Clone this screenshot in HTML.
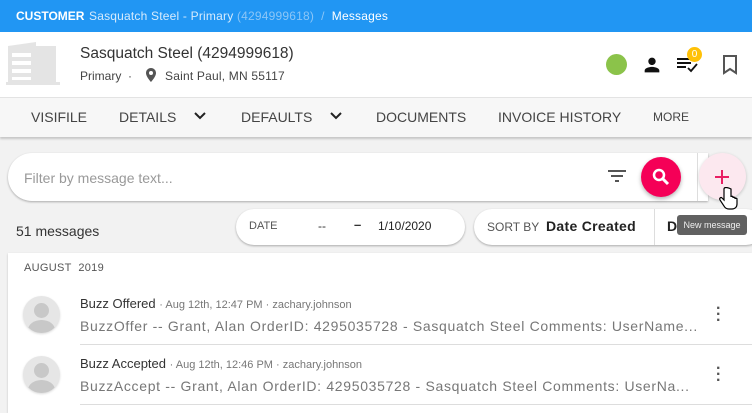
<!DOCTYPE html>
<html><head><style>
*{box-sizing:border-box;margin:0;padding:0}
body{width:752px;height:406px;overflow:hidden;background:#f2f2f2;font-family:"Liberation Sans",sans-serif;position:relative}
.a{position:absolute;white-space:nowrap}
</style></head><body>
<div class="a" style="left:0;top:0;width:752px;height:32px;background:#2196f3"></div>
<div class="a" style="left:16px;top:9px;font-size:12px;color:#fff;font-weight:bold">CUSTOMER</div>
<div class="a" style="left:89px;top:9px;font-size:12px;color:#d6ebfd;letter-spacing:.2px">Sasquatch Steel - Primary <span style="color:#8cc6f7">(4294999618)</span> <span style="color:#8cc6f7">&nbsp;/&nbsp;</span> <span style="color:#fff">Messages</span></div>
<div class="a" style="left:0;top:32px;width:752px;height:65px;background:#fff"></div>
<svg class="a" style="left:6px;top:42px" width="54" height="44"><path d="M2 4 L30 0 L30 42 L2 42Z" fill="#e4e4e4"/><path d="M30 4 L50 4 L50 42 L30 42Z" fill="#e4e4e4"/><rect x="0" y="40" width="54" height="3" fill="#e4e4e4"/><g fill="#fff"><rect x="6" y="11" width="19" height="4"/><rect x="6" y="19" width="19" height="4"/><rect x="6" y="27" width="19" height="4"/><rect x="6" y="35" width="19" height="3"/></g></svg>
<div class="a" style="left:80px;top:45px;font-size:15.5px;color:#333">Sasquatch Steel (4294999618)</div>
<div class="a" style="left:80px;top:69px;font-size:12px;color:#444">Primary &nbsp;·&nbsp;</div>
<svg class="a" style="left:146px;top:68px" width="10" height="14" viewBox="0 0 10 14"><path d="M5 0C2.2 0 0 2.2 0 5c0 3.7 5 9 5 9s5-5.3 5-9C10 2.2 7.8 0 5 0zm0 7a2 2 0 110-4 2 2 0 010 4z" fill="#555"/></svg>
<div class="a" style="left:165px;top:69px;font-size:12px;color:#444;letter-spacing:.2px">Saint Paul, MN 55117</div>
<div class="a" style="left:606px;top:54px;width:21px;height:21px;border-radius:50%;background:#8bc34a"></div>
<svg class="a" style="left:641px;top:54px" width="22" height="22" viewBox="0 0 24 24"><path d="M12 12c2.2 0 4-1.8 4-4s-1.8-4-4-4-4 1.8-4 4 1.8 4 4 4zm0 2c-2.7 0-8 1.3-8 4v2h16v-2c0-2.7-5.3-4-8-4z" fill="#111"/></svg>
<svg class="a" style="left:677px;top:56px" width="24" height="18" viewBox="0 0 24 18"><path d="M0 3h14M0 7h14M0 11h9" stroke="#111" stroke-width="2"/><path d="M11 12l3 3 6-7" stroke="#111" stroke-width="1.8" fill="none"/></svg>
<div class="a" style="left:687px;top:47px;width:15px;height:15px;border-radius:50%;background:#ffc107;color:#fff;font-size:10px;text-align:center;line-height:15px">0</div>
<svg class="a" style="left:722px;top:55px" width="16" height="20" viewBox="0 0 16 20"><path d="M2 1h12v17l-6-4-6 4z" fill="none" stroke="#555" stroke-width="2"/></svg>
<div class="a" style="left:0;top:97px;width:752px;height:40px;background:#f7f7f7;border-top:1px solid #e3e3e3;box-shadow:0 2px 2px rgba(0,0,0,.18)"></div>
<div class="a" style="left:31px;top:109px;font-size:14px;color:#444">VISIFILE</div>
<div class="a" style="left:119px;top:109px;font-size:14px;color:#444">DETAILS</div>
<svg class="a" style="left:193px;top:111px" width="14" height="10"><path d="M2 2l5 5 5-5" stroke="#222" stroke-width="2" fill="none"/></svg>
<div class="a" style="left:241px;top:109px;font-size:14px;color:#444">DEFAULTS</div>
<svg class="a" style="left:329px;top:111px" width="14" height="10"><path d="M2 2l5 5 5-5" stroke="#222" stroke-width="2" fill="none"/></svg>
<div class="a" style="left:376px;top:109px;font-size:14px;color:#444">DOCUMENTS</div>
<div class="a" style="left:498px;top:109px;font-size:14px;color:#444">INVOICE HISTORY</div>
<div class="a" style="left:653px;top:110px;font-size:12px;color:#444">MORE</div>
<div class="a" style="left:8px;top:153px;width:700px;height:48px;background:#fff;border-radius:24px 0 0 24px;box-shadow:0 1px 2px rgba(0,0,0,.3)"></div>
<div class="a" style="left:697px;top:153px;width:1px;height:48px;background:#ddd"></div>
<div class="a" style="left:24px;top:170px;font-size:14px;color:#999">Filter by message text...</div>
<svg class="a" style="left:607px;top:169px" width="20" height="14"><path d="M1 2h18M4 7h12M8 12h4" stroke="#555" stroke-width="2"/></svg>
<div class="a" style="left:641px;top:157px;width:40px;height:40px;border-radius:50%;background:#f50057;box-shadow:0 2px 4px rgba(0,0,0,.3)"></div>
<svg class="a" style="left:651px;top:167px" width="20" height="20"><circle cx="8" cy="8" r="5" stroke="#fff" stroke-width="2.5" fill="none"/><path d="M12 12l5 5" stroke="#fff" stroke-width="3"/></svg>
<div class="a" style="left:699px;top:153px;width:47px;height:47px;border-radius:50%;background:#fce8ef;box-shadow:0 1px 3px rgba(0,0,0,.2)"></div>
<svg class="a" style="left:714px;top:169px" width="16" height="16"><path d="M8 1v14M1 8h14" stroke="#e91e63" stroke-width="2"/></svg>
<div class="a" style="left:16px;top:223px;font-size:14px;color:#333">51 messages</div>
<div class="a" style="left:236px;top:209px;width:229px;height:36px;background:#fff;border-radius:18px;box-shadow:0 1px 2px rgba(0,0,0,.3)"></div>
<div class="a" style="left:249px;top:220px;font-size:11px;color:#555">DATE</div>
<div class="a" style="left:318px;top:219px;font-size:12px;color:#333">--</div>
<div class="a" style="left:354px;top:217px;font-size:13px;color:#333;font-weight:bold">–</div>
<div class="a" style="left:378px;top:219px;font-size:12px;color:#222">1/10/2020</div>
<div class="a" style="left:474px;top:209px;width:290px;height:36px;background:#fff;border-radius:18px;box-shadow:0 1px 2px rgba(0,0,0,.3)"></div>
<div class="a" style="left:654px;top:209px;width:1px;height:36px;background:#ddd"></div>
<div class="a" style="left:487px;top:220px;font-size:12px;color:#555">SORT BY</div>
<div class="a" style="left:546px;top:218px;font-size:14px;color:#222;font-weight:bold;letter-spacing:.3px">Date Created</div>
<div class="a" style="left:667px;top:218px;font-size:14px;color:#222;font-weight:bold">Desc</div>
<div class="a" style="left:677px;top:215px;width:70px;height:20px;background:#616161;border-radius:3px;color:#eee;font-size:9px;text-align:center;line-height:20px">New message</div>
<svg class="a" style="left:719px;top:187px" width="20" height="24" viewBox="0 0 20 24"><path d="M5 2v11l-2-2c-1-1-3 0-2 2l4 6c1 2 3 3 5 3h3c3 0 5-2 5-5v-5c0-1-2-1-2 0v-1c0-1-2-1-2 0v-1c0-1-2-1-2 0V2C8 0 5 0 5 2z" fill="#fff" stroke="#000" stroke-width="1.2"/></svg>
<div class="a" style="left:8px;top:253px;width:744px;height:160px;background:#fff;box-shadow:0 1px 2px rgba(0,0,0,.2)"></div>
<div class="a" style="left:24px;top:262px;font-size:11px;color:#555;letter-spacing:.3px">AUGUST&nbsp; 2019</div>
<div class="a" style="left:23px;top:296px;width:37px;height:37px;border-radius:50%;background:#e6e6e6;overflow:hidden;box-shadow:0 1px 2px rgba(0,0,0,.15)"><div style="position:absolute;left:11px;top:7px;width:15px;height:15px;border-radius:50%;background:#c8c8c8"></div><div style="position:absolute;left:5px;top:24px;width:27px;height:20px;border-radius:50%;background:#c8c8c8"></div></div>
<div class="a" style="left:80px;top:296px;font-size:13px;color:#333">Buzz Offered <span style="font-size:11px;color:#777">· Aug 12th, 12:47 PM · zachary.johnson</span></div>
<div class="a" style="left:80px;top:318px;font-size:14px;color:#777;letter-spacing:.68px">BuzzOffer -- Grant, Alan OrderID: 4295035728 - Sasquatch Steel Comments: UserName...</div>
<div class="a" style="left:80px;top:344px;width:672px;height:1px;background:#ddd"></div>
<div class="a" style="left:716px;top:306px;font-size:16px;color:#555;line-height:6px;font-weight:bold">·<br>·<br>·</div>
<div class="a" style="left:23px;top:356px;width:37px;height:37px;border-radius:50%;background:#e6e6e6;overflow:hidden;box-shadow:0 1px 2px rgba(0,0,0,.15)"><div style="position:absolute;left:11px;top:7px;width:15px;height:15px;border-radius:50%;background:#c8c8c8"></div><div style="position:absolute;left:5px;top:24px;width:27px;height:20px;border-radius:50%;background:#c8c8c8"></div></div>
<div class="a" style="left:80px;top:356px;font-size:13px;color:#333">Buzz Accepted <span style="font-size:11px;color:#777">· Aug 12th, 12:46 PM · zachary.johnson</span></div>
<div class="a" style="left:80px;top:378px;font-size:14px;color:#777;letter-spacing:.68px">BuzzAccept -- Grant, Alan OrderID: 4295035728 - Sasquatch Steel Comments: UserNa...</div>
<div class="a" style="left:80px;top:404px;width:672px;height:1px;background:#ddd"></div>
<div class="a" style="left:716px;top:366px;font-size:16px;color:#555;line-height:6px;font-weight:bold">·<br>·<br>·</div>
</body></html>
